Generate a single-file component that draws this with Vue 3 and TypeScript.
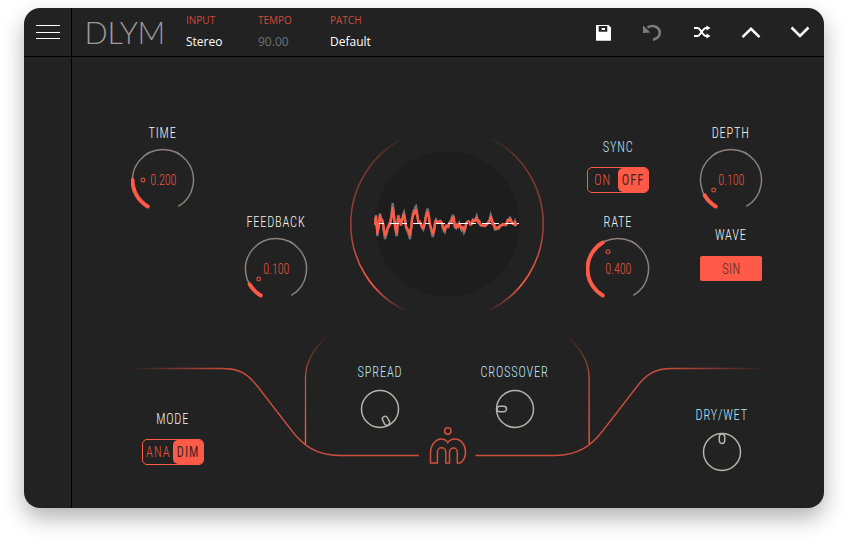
<script setup lang="ts">
const PAGE_X = 72
const PAGE_Y = 57

interface Knob { label: string; value: number; text: string; cx: number; cy: number }
interface Dial { label: string; cx: number; cy: number; rot: number }

const pt = (cx: number, cy: number, r: number, deg: number) => {
  const a = (deg * Math.PI) / 180
  return { x: cx - r * Math.sin(a), y: cy + r * Math.cos(a) }
}
const arc = (r: number, from: number, to: number) => {
  const s = pt(32, 32, r, from)
  const e = pt(32, 32, r, to)
  const large = to - from > 180 ? 1 : 0
  return `M${s.x.toFixed(2)} ${s.y.toFixed(2)}A${r} ${r} 0 ${large} 1 ${e.x.toFixed(2)} ${e.y.toFixed(2)}`
}

const knobs: (Knob & { track: string; fill: string; dot: { x: number; y: number }; pos: Record<string, string> })[] = [
  { label: 'TIME', value: 0.2, text: '0.200', cx: 163, cy: 180 },
  { label: 'FEEDBACK', value: 0.1, text: '0.100', cx: 276, cy: 269 },
  { label: 'RATE', value: 0.4, text: '0.400', cx: 618, cy: 269 },
  { label: 'DEPTH', value: 0.1, text: '0.100', cx: 731, cy: 180 },
].map((k) => {
  const end = 30 + 300 * k.value
  return {
    ...k,
    track: arc(30.5, 30, 330),
    fill: arc(30.5, 30, end),
    dot: pt(32, 32, 20, end),
    pos: { left: `${k.cx - 50 - PAGE_X}px`, top: `${k.cy - 58 - PAGE_Y}px` },
  }
})

const dials: (Dial & { pos: Record<string, string> })[] = [
  { label: 'SPREAD', cx: 380, cy: 409, rot: 153 },
  { label: 'CROSSOVER', cx: 514.5, cy: 409, rot: -90 },
  { label: 'DRY/WET', cx: 721.5, cy: 452, rot: 0 },
].map((d) => ({
  ...d,
  pos: { left: `${d.cx - 50 - PAGE_X}px`, top: `${d.cy - 48 - PAGE_Y}px` },
}))

const wave: [number, number][] = [
  [105, 300], [108, 272], [112, 330], [120, 268], [128, 290], [135, 338], [145, 305], [150, 300],
  [158, 240], [165, 300], [170, 330], [175, 272], [183, 300], [192, 265], [200, 312], [210, 338],
  [218, 272], [228, 248], [235, 290], [250, 312], [263, 255], [270, 300], [278, 332], [288, 285],
  [300, 288], [312, 316], [322, 305], [332, 288], [340, 275], [345, 306], [358, 295], [372, 320],
  [382, 290], [395, 296], [410, 275], [420, 298], [440, 298], [452, 272], [465, 312], [480, 302],
  [497, 300], [510, 280], [520, 296], [530, 296],
]
const noise = (i: number) => {
  const s = Math.sin(i * 12.9898) * 43758.5453
  return (s - Math.floor(s)) * 2 - 1
}
const toPoints = (gain: number) => {
  const out: string[] = []
  wave.forEach(([x, y], i) => {
    const next = wave[i + 1]
    const steps = next ? 4 : 1
    for (let s = 0; s < steps; s++) {
      const t = s / steps
      const nx = next ? x + (next[0] - x) * t : x
      const ny = next ? y + (next[1] - y) * t : y
      const jitter = s === 0 ? 0 : noise(i * 4 + s) * 2.2
      const px = 340 + nx / 3
      const py = 223.4 + ((ny - 295) / 3) * gain + jitter
      out.push(`${px.toFixed(1)},${py.toFixed(1)}`)
    }
  })
  return out.join(' ')
}
const waveOrange = toPoints(0.84)
const waveGrey = toPoints(1.1)
</script>

<template>
  <div class="page">
    <div class="card">
      <header class="header">
        <button class="menu" aria-label="menu"><span></span><span></span><span></span></button>
        <div class="logo">DLYM</div>
        <div class="field f-input"><small>INPUT</small><b>Stereo</b></div>
        <div class="field f-tempo"><small>TEMPO</small><b class="dim">90.00</b></div>
        <div class="field f-patch"><small>PATCH</small><b>Default</b></div>
        <div class="tools">
          <svg class="t-save" width="20" height="20" viewBox="0 0 20 20">
            <path fill="#fff" d="M2.600 3H14.500L17 5.500V18.200C17 18.500 16.800 18.700 16.500 18.700H2.600C2.300 18.700 2 18.500 2 18.200V3.500C2 3.200 2.300 3 2.600 3Z" />
            <rect x="4.700" y="4" width="8.600" height="5.700" fill="#222" />
            <rect x="7.700" y="6" width="3.300" height="2" fill="#fff" />
          </svg>
          <svg class="t-undo" width="24" height="20" viewBox="0 0 24 20">
            <path fill="none" stroke="#7b7b7b" stroke-width="2.600" d="M7.500 5.500C9 4.500 10.500 4 12.500 4C16.500 4 19.800 7 19.800 10.500C19.800 14.500 16.500 17.300 13 17.600" />
            <path fill="#7b7b7b" d="M3 3.500L10.500 10.500L3 11Z" />
          </svg>
          <svg class="t-mix" width="20" height="20" viewBox="0 0 20 20">
            <path fill="none" stroke="#fff" stroke-width="2" d="M2 6H5.500C8.500 6 10.500 14 14 14H15.500M2 14H5.500C8.500 14 10.500 6 14 6H15.500" />
            <path fill="#fff" d="M14.500 3.500L18.500 6L14.500 8.500ZM14.500 11.500L18.500 14L14.500 16.500Z" />
          </svg>
          <svg class="t-up" width="20" height="20" viewBox="0 0 20 20">
            <path fill="none" stroke="#fff" stroke-width="2.500" d="M1.500 15.200L10 6.800L18.500 15.200" />
          </svg>
          <svg class="t-down" width="20" height="20" viewBox="0 0 20 20">
            <path fill="none" stroke="#fff" stroke-width="2.500" d="M1.500 5.500L10 14L18.500 5.500" />
          </svg>
        </div>
      </header>

      <div class="body">
        <aside class="side"></aside>
        <main class="stage">
          <svg class="lines" width="752" height="451" viewBox="72 57 752 451">
            <defs>
              <linearGradient id="ring" gradientUnits="userSpaceOnUse" x1="0" y1="136" x2="0" y2="312">
                <stop offset="0" stop-color="#ff5a47" stop-opacity="0" />
                <stop offset="0.12" stop-color="#ff5a47" stop-opacity="0.32" />
                <stop offset="0.55" stop-color="#ff5a47" stop-opacity="0.55" />
                <stop offset="0.85" stop-color="#ff5a47" stop-opacity="1" />
                <stop offset="1" stop-color="#ff5a47" stop-opacity="0" />
              </linearGradient>
              <linearGradient id="wire" gradientUnits="userSpaceOnUse" x1="128" y1="0" x2="230" y2="0">
                <stop offset="0" stop-color="#d04e3e" stop-opacity="0" />
                <stop offset="1" stop-color="#d04e3e" />
              </linearGradient>
              <linearGradient id="post" gradientUnits="userSpaceOnUse" x1="0" y1="334" x2="0" y2="444">
                <stop offset="0" stop-color="#ff5a47" stop-opacity="0" />
                <stop offset="0.4" stop-color="#ff5a47" stop-opacity="0.75" />
                <stop offset="1" stop-color="#ff5a47" />
              </linearGradient>
            </defs>

            <circle cx="447" cy="224" r="72.500" fill="#1d1d1d" />
            <path class="ring" d="M404.500 137.800A96 96 0 0 0 404.500 310.200" />
            <path class="ring" d="M489.500 137.800A96 96 0 0 1 489.500 310.200" />
            <polyline class="w-grey" :points="waveGrey" />
            <polyline class="w-orange" :points="waveOrange" />
            <line class="w-axis" x1="379" y1="223.500" x2="519" y2="223.500" />

            <g>
              <path class="wire" d="M128 368.500H222C240 368.500 248 374 258 387L292 431C302 444 315 455.500 340 455.500H419" />
              <path class="post" d="M305.500 444V378C305.500 360 315 348 329 334" />
            </g>
            <g transform="translate(894.600 0) scale(-1 1)">
              <path class="wire" d="M128 368.500H222C240 368.500 248 374 258 387L292 431C302 444 315 455.500 340 455.500H419" />
              <path class="post" d="M305.500 444V378C305.500 360 315 348 329 334" />
            </g>

            <circle class="mark" cx="447.800" cy="431" r="3.200" />
            <path class="mark" d="M430.500 463V453C430.500 445 436 439 441 439C444 439 446.500 440.500 447.800 442.500C449.200 440.500 451.800 439 455 439C461 439 465.500 445 465.500 452C465.500 457 463.500 461 460 463H457.300V452A3.900 3.900 0 0 0 449.500 452V463H445.800V452A4.200 4.200 0 0 0 437.400 452V463Z" />
          </svg>

          <div v-for="k in knobs" :key="k.label" class="knob" :style="k.pos">
            <div class="label" :class="{ warm: k.label !== 'RATE' }"><span>{{ k.label }}</span></div>
            <div class="dial">
              <svg width="64" height="64" viewBox="0 0 64 64">
                <path class="track" :d="k.track" />
                <path class="fill" :d="k.fill" />
                <circle class="dot" :cx="k.dot.x" :cy="k.dot.y" r="1.900" />
              </svg>
              <span class="val"><i>{{ k.text }}</i></span>
            </div>
          </div>

          <div v-for="d in dials" :key="d.label" class="knob small" :style="d.pos">
            <div class="label cool"><span>{{ d.label }}</span></div>
            <svg width="40" height="40" viewBox="-20 -20 40 40">
              <circle class="rim" r="18.500" />
              <rect class="rim" x="-2.700" y="-18" width="5.400" height="9.500" rx="2.700" :transform="`rotate(${d.rot})`" />
            </svg>
          </div>

          <div class="group g-sync">
            <div class="label cool"><span>SYNC</span></div>
            <div class="toggle"><span><i>ON</i></span><span class="on"><i>OFF</i></span></div>
          </div>
          <div class="group g-wave">
            <div class="label"><span>WAVE</span></div>
            <div class="pill"><i>SIN</i></div>
          </div>
          <div class="group g-mode">
            <div class="label"><span>MODE</span></div>
            <div class="toggle"><span><i>ANA</i></span><span class="on"><i>DIM</i></span></div>
          </div>
        </main>
      </div>
    </div>
  </div>
</template>

<style>
html, body { background: #fff; margin: 0; }
</style>

<style scoped>
.page {
  width: 848px;
  height: 548px;
  box-sizing: border-box;
  padding: 8px 24px;
  overflow: hidden;
}
.card {
  width: 800px;
  height: 500px;
  background: #222;
  border-radius: 16px;
  box-shadow: 0 10px 22px rgba(0, 0, 0, 0.3);
  display: flex;
  flex-direction: column;
  overflow: hidden;
  font-family: "Open Sans", sans-serif;
}
.header {
  height: 48px;
  flex: none;
  border-bottom: 1px solid #000;
  display: flex;
  align-items: stretch;
}
.menu {
  width: 48px;
  flex: none;
  box-sizing: border-box;
  padding: 0 0 0 12px;
  border: 0;
  border-right: 1px solid #000;
  background: none;
  display: flex;
  flex-direction: column;
  justify-content: center;
  align-items: flex-start;
  gap: 5.500px;
}
.menu span { display: block; width: 24px; height: 1px; background: #fff; }
.logo {
  width: 114px;
  padding-left: 12.500px;
  box-sizing: border-box;
  font-family: Lato, "Open Sans", sans-serif;
  font-weight: 300;
  font-size: 30.500px;
  letter-spacing: -0.300px;
  line-height: 48px;
  color: #9c9c9c;
  flex: none;
}
.field { display: flex; flex-direction: column; padding-top: 6px; flex: none; }
.f-input { width: 72px; }
.f-tempo { width: 72px; }
.f-patch { width: 80px; }
.field small { font-size: 10px; line-height: 12px; color: #cf4a3b; }
.field b { font-weight: 400; font-size: 12px; line-height: 17px; margin-top: 7px; color: #fff; }
.field b.dim { color: #66727c; }
.tools {
  margin-left: auto;
  display: flex;
  align-items: center;
  padding-right: 14px;
}
.t-undo { margin-left: 26px; }
.t-mix { margin-left: 27.500px; }
.t-up { margin-left: 29px; }
.t-down { margin-left: 29.500px; }
.body { flex: 1; display: flex; min-height: 0; }
.side { width: 48px; flex: none; box-sizing: border-box; border-right: 1px solid #000; }
.stage { flex: 1; position: relative; }
.lines { position: absolute; left: 0; top: 0; }
.ring { fill: none; stroke: url(#ring); stroke-width: 1.600; }
.w-grey { fill: none; stroke: #707070; stroke-width: 2.400; }
.w-orange { fill: none; stroke: #ff5a47; stroke-width: 2.400; stroke-linejoin: round; }
.w-axis { stroke: #fff; stroke-width: 1; stroke-dasharray: 5 6 9 3; }
.wire { fill: none; stroke: url(#wire); stroke-width: 1.300; }
.post { fill: none; stroke: url(#post); stroke-width: 1.300; }
.mark { fill: none; stroke: #d4503f; stroke-width: 1.500; }

.label {
  height: 20px;
  line-height: 22px;
  font-family: "Roboto Condensed", Roboto, sans-serif;
  font-size: 15.500px;
  font-weight: 300;
  letter-spacing: 1px;
  color: #eef6fa;
  text-align: center;
  white-space: nowrap;
}
.label.warm { color: #f8f3ea; }
.label.cool { color: #bce6fa; }
.label span, .val i, .toggle i, .pill i {
  display: inline-block;
  font-style: normal;
  transform: scaleX(0.8);
}
.val i { transform: scaleX(0.86); }
.knob {
  position: absolute;
  width: 100px;
  display: flex;
  flex-direction: column;
  align-items: center;
}
.dial { position: relative; width: 64px; height: 64px; margin-top: 6px; }
.dial svg { display: block; }
.small svg { display: block; margin-top: 8px; }
.track { fill: none; stroke: #8b817b; stroke-width: 1.500; }
.fill { fill: none; stroke: #ff5a47; stroke-width: 4; stroke-linecap: round; }
.dot { fill: none; stroke: #cf4a3b; stroke-width: 1.200; }
.val {
  position: absolute;
  inset: 0;
  display: flex;
  align-items: center;
  justify-content: center;
  padding-bottom: 1px;
  box-sizing: border-box;
  font-family: "Roboto Condensed", Roboto, sans-serif;
  font-weight: 300;
  font-size: 14px;
  color: #ea5643;
}
.rim { fill: none; stroke: #b4b4b0; stroke-width: 1.500; }

.group {
  position: absolute;
  width: 100px;
  display: flex;
  flex-direction: column;
  align-items: center;
  gap: 11px;
}
.g-sync { left: 496px; top: 79px; }
.g-wave { left: 609px; top: 167px; gap: 12px; }
.g-mode { left: 51px; top: 351px; }
.toggle {
  box-sizing: border-box;
  width: 62px;
  height: 26px;
  border: 1px solid #ff5a47;
  border-radius: 5px;
  display: flex;
  overflow: hidden;
  font-family: "Roboto Condensed", Roboto, sans-serif;
  font-weight: 300;
  font-size: 15.500px;
  letter-spacing: 1.300px;
  line-height: 25px;
  text-align: center;
  color: #ea5643;
}
.toggle span { flex: 1 1 0; min-width: 0; white-space: nowrap; }
.toggle .on { background: #ff5a47; color: #3f2623; border-radius: 5px 0 0 5px; font-weight: 400; }
.pill {
  width: 62px;
  height: 25px;
  line-height: 26px;
  background: #ff5a47;
  border-radius: 2px;
  text-align: center;
  font-family: "Roboto Condensed", Roboto, sans-serif;
  font-size: 15.500px;
  font-weight: 300;
  letter-spacing: 0.500px;
  color: #3f2623;
}
</style>
